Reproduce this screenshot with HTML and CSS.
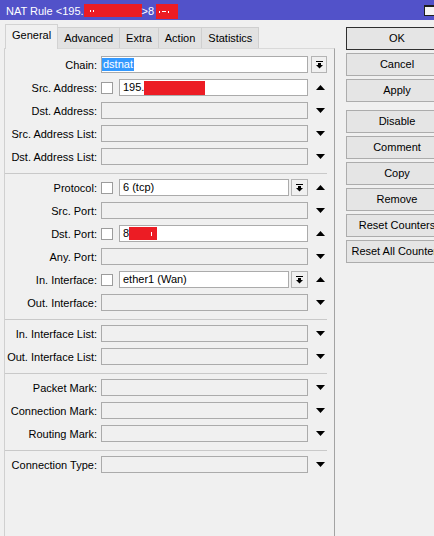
FILE: index.html
```html
<!DOCTYPE html>
<html>
<head>
<meta charset="utf-8">
<title>NAT Rule</title>
<link rel="stylesheet" href="styles.css">
</head>
<body>
<div class="win">
  <div class="titlebar">
    <span class="title-text">NAT Rule &lt;195.</span><span class="redact r1"><i class="nick"></i><i class="nick"></i></span><span class="title-text">&gt;8</span><span class="redact r2"><i class="nick"></i><i class="nick dash"></i><i class="nick"></i></span>
    <span class="maxbox"></span>
  </div>
  <div class="main">
    <div class="leftcol">
      <div class="tabs">
        <div class="tab active">General</div>
        <div class="tab">Advanced</div>
        <div class="tab">Extra</div>
        <div class="tab">Action</div>
        <div class="tab">Statistics</div>
      </div>
      <div class="panel">
        <div class="row">
          <div class="lbl">Chain:</div>
          <div class="field"><div class="inp chain"><span class="sel">dstnat</span></div></div>
          <div class="side start"><div class="dd"><svg width="7" height="8" viewBox="0 0 7 8"><rect x="0" y="0" width="7" height="1"/><rect x="2" y="2" width="3" height="2"/><path d="M0 4H7L3.5 7.5Z"/></svg></div></div>
        </div>
        <div class="row">
          <div class="lbl">Src. Address:</div>
          <div class="field"><span class="cb"></span><div class="inp">195.<span class="redact r3"></span></div></div>
          <div class="side"><svg class="tri" width="9" height="5" viewBox="0 0 9 5"><path d="M0 5L4.5 0L9 5Z"/></svg></div>
        </div>
        <div class="row">
          <div class="lbl">Dst. Address:</div>
          <div class="field"><div class="inp off"></div></div>
          <div class="side"><svg class="tri" width="9" height="5" viewBox="0 0 9 5"><path d="M0 0H9L4.5 5Z"/></svg></div>
        </div>
        <div class="row">
          <div class="lbl">Src. Address List:</div>
          <div class="field"><div class="inp off"></div></div>
          <div class="side"><svg class="tri" width="9" height="5" viewBox="0 0 9 5"><path d="M0 0H9L4.5 5Z"/></svg></div>
        </div>
        <div class="row">
          <div class="lbl">Dst. Address List:</div>
          <div class="field"><div class="inp off"></div></div>
          <div class="side"><svg class="tri" width="9" height="5" viewBox="0 0 9 5"><path d="M0 0H9L4.5 5Z"/></svg></div>
        </div>
        <div class="sep"></div>
        <div class="row">
          <div class="lbl">Protocol:</div>
          <div class="field"><span class="cb"></span><div class="inp">6 (tcp)</div><div class="dd inl"><svg width="7" height="8" viewBox="0 0 7 8"><rect x="0" y="0" width="7" height="1"/><rect x="2" y="2" width="3" height="2"/><path d="M0 4H7L3.5 7.5Z"/></svg></div></div>
          <div class="side"><svg class="tri" width="9" height="5" viewBox="0 0 9 5"><path d="M0 5L4.5 0L9 5Z"/></svg></div>
        </div>
        <div class="row">
          <div class="lbl">Src. Port:</div>
          <div class="field"><div class="inp off"></div></div>
          <div class="side"><svg class="tri" width="9" height="5" viewBox="0 0 9 5"><path d="M0 0H9L4.5 5Z"/></svg></div>
        </div>
        <div class="row">
          <div class="lbl">Dst. Port:</div>
          <div class="field"><span class="cb"></span><div class="inp">8<span class="redact r4"><i class="nick"></i></span></div></div>
          <div class="side"><svg class="tri" width="9" height="5" viewBox="0 0 9 5"><path d="M0 5L4.5 0L9 5Z"/></svg></div>
        </div>
        <div class="row">
          <div class="lbl">Any. Port:</div>
          <div class="field"><div class="inp off"></div></div>
          <div class="side"><svg class="tri" width="9" height="5" viewBox="0 0 9 5"><path d="M0 0H9L4.5 5Z"/></svg></div>
        </div>
        <div class="row">
          <div class="lbl">In. Interface:</div>
          <div class="field"><span class="cb"></span><div class="inp">ether1 (Wan)</div><div class="dd inl"><svg width="7" height="8" viewBox="0 0 7 8"><rect x="0" y="0" width="7" height="1"/><rect x="2" y="2" width="3" height="2"/><path d="M0 4H7L3.5 7.5Z"/></svg></div></div>
          <div class="side"><svg class="tri" width="9" height="5" viewBox="0 0 9 5"><path d="M0 5L4.5 0L9 5Z"/></svg></div>
        </div>
        <div class="row">
          <div class="lbl">Out. Interface:</div>
          <div class="field"><div class="inp off"></div></div>
          <div class="side"><svg class="tri" width="9" height="5" viewBox="0 0 9 5"><path d="M0 0H9L4.5 5Z"/></svg></div>
        </div>
        <div class="sep"></div>
        <div class="row">
          <div class="lbl">In. Interface List:</div>
          <div class="field"><div class="inp off"></div></div>
          <div class="side"><svg class="tri" width="9" height="5" viewBox="0 0 9 5"><path d="M0 0H9L4.5 5Z"/></svg></div>
        </div>
        <div class="row">
          <div class="lbl">Out. Interface List:</div>
          <div class="field"><div class="inp off"></div></div>
          <div class="side"><svg class="tri" width="9" height="5" viewBox="0 0 9 5"><path d="M0 0H9L4.5 5Z"/></svg></div>
        </div>
        <div class="sep"></div>
        <div class="row">
          <div class="lbl">Packet Mark:</div>
          <div class="field"><div class="inp off"></div></div>
          <div class="side"><svg class="tri" width="9" height="5" viewBox="0 0 9 5"><path d="M0 0H9L4.5 5Z"/></svg></div>
        </div>
        <div class="row">
          <div class="lbl">Connection Mark:</div>
          <div class="field"><div class="inp off"></div></div>
          <div class="side"><svg class="tri" width="9" height="5" viewBox="0 0 9 5"><path d="M0 0H9L4.5 5Z"/></svg></div>
        </div>
        <div class="row">
          <div class="lbl">Routing Mark:</div>
          <div class="field"><div class="inp off"></div></div>
          <div class="side"><svg class="tri" width="9" height="5" viewBox="0 0 9 5"><path d="M0 0H9L4.5 5Z"/></svg></div>
        </div>
        <div class="sep"></div>
        <div class="row">
          <div class="lbl">Connection Type:</div>
          <div class="field"><div class="inp off"></div></div>
          <div class="side"><svg class="tri" width="9" height="5" viewBox="0 0 9 5"><path d="M0 0H9L4.5 5Z"/></svg></div>
        </div>
      </div>
    </div>
    <div class="btns">
      <div class="btn def">OK</div>
      <div class="btn">Cancel</div>
      <div class="btn">Apply</div>
      <div class="btn group">Disable</div>
      <div class="btn">Comment</div>
      <div class="btn">Copy</div>
      <div class="btn">Remove</div>
      <div class="btn">Reset Counters</div>
      <div class="btn">Reset All Counters</div>
    </div>
  </div>
</div>
</body>
</html>
```

FILE: styles.css
```css
html, body {
  margin: 0;
  padding: 0;
  background: #f0f0f0;
}

.win {
  width: 434px;
  height: 536px;
  overflow: hidden;
  font-family: "Liberation Sans", Arial, sans-serif;
  font-size: 11px;
  color: #000;
  background: #f0f0f0;
  display: flex;
  flex-direction: column;
}

/* title bar */
.titlebar {
  height: 20px;
  flex: none;
  background: #5252c9;
  display: flex;
  align-items: center;
  padding-left: 6px;
  color: #fff;
  white-space: nowrap;
}
.title-text {
  font-size: 11px;
  line-height: 20px;
  padding-top: 1px;
}
.redact {
  display: inline-flex;
  align-items: center;
  background: #ec1c24;
  flex: none;
}
.r1 {
  width: 58px;
  height: 13px;
  margin-top: 1px;
  padding-left: 6px;
  box-sizing: border-box;
}
.r2 {
  width: 22px;
  height: 15px;
  margin-top: 3px;
  margin-left: 2px;
  padding-left: 3px;
  box-sizing: border-box;
}
.nick {
  display: inline-block;
  width: 1px;
  height: 2px;
  background: #fff;
  margin-right: 2px;
}
.nick.dash {
  width: 4px;
  height: 1px;
}
.maxbox {
  margin-left: auto;
  margin-right: -4px;
  width: 14px;
  height: 11px;
  box-sizing: border-box;
  border: 1px solid #1e1e1e;
  border-top-width: 2px;
  background: #f4f4f4;
}

/* main area */
.main {
  flex: 1;
  display: flex;
  min-height: 0;
}
.leftcol {
  width: 335px;
  flex: none;
  padding-left: 4px;
  box-sizing: border-box;
  display: flex;
  flex-direction: column;
}

/* tabs */
.tabs {
  height: 28px;
  flex: none;
  display: flex;
  align-items: flex-end;
  padding-left: 1px;
}
.tab {
  height: 21px;
  line-height: 20px;
  padding: 0 6px;
  box-sizing: border-box;
  border: 1px solid #cfcfcf;
  border-bottom: none;
  margin-left: -1px;
  background: #e2e2e2;
  white-space: nowrap;
}
.tab:first-child {
  margin-left: 0;
}
.tab.active {
  height: 25px;
  line-height: 21px;
  margin-bottom: -1px;
  background: #f0f0f0;
  border-color: #d2d2d2;
  position: relative;
  z-index: 1;
}

/* panel */
.panel {
  flex: 1;
  border-top: 1px solid #d9d9d9;
  border-left: 1px solid #d0d0d0;
  border-right: 1px solid #a3a3a3;
  padding-top: 4px;
  background: #f0f0f0;
}
.row {
  height: 23px;
  display: flex;
  align-items: center;
}
.lbl {
  width: 92px;
  flex: none;
  text-align: right;
  white-space: nowrap;
}
.field {
  width: 207px;
  flex: none;
  margin-left: 4px;
  display: flex;
  align-items: center;
}
.side {
  width: 25px;
  flex: none;
  display: flex;
  justify-content: center;
  align-items: center;
}
.side.start {
  justify-content: flex-start;
  padding-left: 3px;
  box-sizing: border-box;
}
.tri {
  display: block;
  fill: #000;
}

.inp {
  flex: 1;
  height: 17px;
  box-sizing: border-box;
  border: 1px solid #ababab;
  background: #fff;
  padding-left: 3px;
  display: flex;
  align-items: center;
  white-space: nowrap;
  overflow: hidden;
  line-height: 15px;
}
.inp.off {
  background: #f0f0f0;
}
.inp.chain {
  padding-left: 0;
}
.sel {
  background: #3399ff;
  color: #fff;
  line-height: 13px;
  padding: 0 1px 0 1px;
}
.r3 {
  width: 61px;
  height: 14px;
}
.r4 {
  width: 28px;
  height: 13px;
  justify-content: flex-end;
  padding-right: 5px;
  box-sizing: border-box;
}
.r4 .nick {
  height: 4px;
  margin-right: 0;
}

.cb {
  width: 12px;
  height: 12px;
  box-sizing: border-box;
  border: 1px solid #9c9c9c;
  background: #fff;
  flex: none;
  margin-right: 6px;
}
.dd {
  width: 16px;
  height: 17px;
  box-sizing: border-box;
  border: 1px solid #b4b4b4;
  background: #f0f0f0;
  display: flex;
  align-items: center;
  justify-content: center;
  flex: none;
}
.dd svg {
  display: block;
  fill: #000;
}
.dd.inl {
  width: 17px;
  margin-left: 2px;
}

.sep {
  margin: 5px 7px 2px 0;
  border-top: 1px solid #c9c9c9;
}

/* buttons */
.btns {
  flex: none;
  margin-left: 11px;
  padding-top: 7px;
  display: flex;
  flex-direction: column;
  gap: 3px;
}
.btn {
  width: 102px;
  height: 23px;
  box-sizing: border-box;
  border: 1px solid #acacac;
  background: #e5e5e5;
  text-align: center;
  line-height: 21px;
  white-space: nowrap;
  overflow: hidden;
}
.btn.def {
  border-color: #2f2f2f;
}
.btn.group {
  margin-top: 5px;
}
```
